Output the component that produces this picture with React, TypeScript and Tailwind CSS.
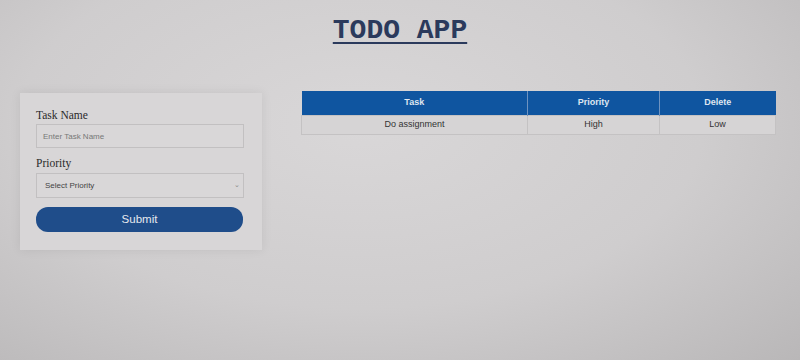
import { useState } from "react";

const todos = [{ task: "Do assignment", priority: "High", extra: "Low" }];

const App = () => {
  const [taskName, setTaskName] = useState("");
  const [priority, setPriority] = useState("");

  return (
    <div className="w-[800px] h-[360px] overflow-hidden bg-[radial-gradient(ellipse_at_45%_35%,#d9d7d8_0%,#cfcdce_55%,#b9b7b8_100%)] font-['Liberation_Sans',sans-serif]">
      <h1 className="pt-[16px] text-center font-['Liberation_Mono',monospace] text-[28px] font-bold leading-[30px] text-[#2b3a5c] underline decoration-[2px] underline-offset-[4px]">
        TODO APP
      </h1>

      <div className="mt-[45px] flex items-start">
        <form
          className="ml-[20px] mt-[2px] w-[242px] h-[157px] bg-[#d8d6d7] shadow-[0_0_10px_rgba(0,0,0,0.08)] px-[16px] pt-[16px]"
          onSubmit={(e) => e.preventDefault()}
        >
          <label className="block font-['Liberation_Serif',serif] text-[11.5px] leading-[13px] text-[#2a2a2a]">
            Task Name
          </label>
          <input
            type="text"
            value={taskName}
            onChange={(e) => setTaskName(e.target.value)}
            placeholder="Enter Task Name"
            className="mt-[2px] block w-[208px] h-[24px] border border-[#c2c0c1] bg-[#d9d7d8] px-[6px] text-[8px] text-[#555] placeholder:text-[#777] outline-none"
          />
          <label className="mt-[9px] block font-['Liberation_Serif',serif] text-[11.5px] leading-[13px] text-[#2a2a2a]">
            Priority
          </label>
          <div className="relative mt-[3px] w-[208px]">
            <select
              value={priority}
              onChange={(e) => setPriority(e.target.value)}
              className="block w-full h-[25px] appearance-none border border-[#c2c0c1] bg-[#d9d7d8] px-[8px] text-[8px] text-[#444] outline-none"
            >
              <option value="">Select Priority</option>
              <option value="High">High</option>
              <option value="Medium">Medium</option>
              <option value="Low">Low</option>
            </select>
            <span className="pointer-events-none absolute right-[4px] top-[7px] text-[7px] text-[#888]">⌄</span>
          </div>
          <button
            type="submit"
            className="mt-[9px] block w-[207px] h-[25px] rounded-[12px] bg-[#1f4d8a] text-[11.5px] text-[#e6e9ef]"
          >
            Submit
          </button>
        </form>

        <table className="ml-[39px] w-[475px] border-collapse text-[9px]">
          <thead>
            <tr className="bg-[#0f55a0] text-[#dfe6f0] h-[24px]">
              <th className="w-[226px] border-r border-[#6f93c0] font-bold">Task</th>
              <th className="w-[132px] border-r border-[#6f93c0] font-bold">Priority</th>
              <th className="font-bold">Delete</th>
            </tr>
          </thead>
          <tbody>
            {todos.map((t) => (
              <tr key={t.task} className="h-[19px] bg-[#d6d4d5] text-[#333]">
                <td className="border border-[#c4c2c3] text-center">{t.task}</td>
                <td className="border border-[#c4c2c3] text-center">{t.priority}</td>
                <td className="border border-[#c4c2c3] text-center">{t.extra}</td>
              </tr>
            ))}
          </tbody>
        </table>
      </div>
    </div>
  );
};

export default App;
